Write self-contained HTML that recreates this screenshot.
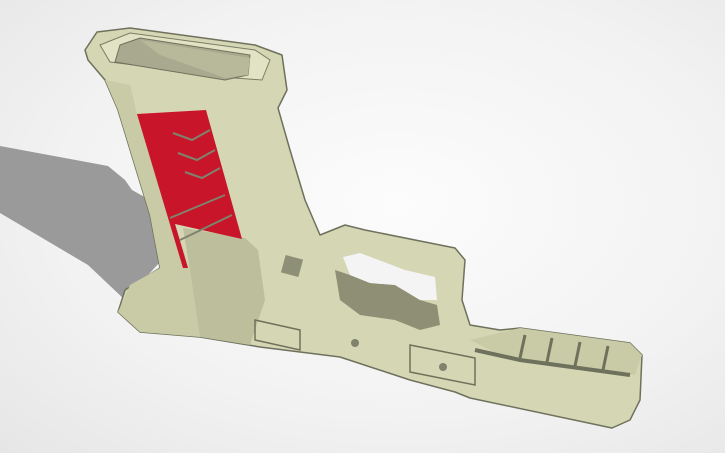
<!DOCTYPE html>
<html><head><style>
html,body{margin:0;padding:0;width:725px;height:453px;overflow:hidden;background:radial-gradient(ellipse at 55% 45%,#fcfcfc 0%,#f2f2f2 60%,#e6e6e6 100%);}
svg{display:block}
</style></head><body>
<svg width="725" height="453" viewBox="0 0 725 453">
<polygon points="0,146 108,166 125,180 132,190 150,200 160,262 125,300 88,265 0,213" fill="#9a9a9a"/>
<polygon points="85,50 97,32 130,28 255,45 282,55 287,90 278,108 290,150 305,200 320,235 345,225 365,230 455,248 465,260 462,300 470,325 500,330 520,328 630,343 642,355 640,400 630,420 612,428 470,398 455,392 440,388 410,380 340,357 300,352 260,347 200,337 140,332 118,312 125,290 160,268 150,215 118,110 105,80 88,60" fill="#d5d6b3" stroke="#6e715c" stroke-width="1.5" stroke-linejoin="round"/>
<polygon points="105,80 118,110 150,215 160,268 130,285 118,312 140,332 200,337 190,270 175,224 137,114 130,85" fill="#c9caa6"/>
<polygon points="183,228 245,238 258,250 265,300 250,345 200,337 190,270" fill="#bdbe9c"/>
<polygon points="100,45 130,33 255,50 270,60 262,80 235,78 110,62" fill="#e2e3c4" stroke="#7a7d66" stroke-width="1"/>
<polygon points="120,45 140,38 250,55 248,75 225,80 115,62" fill="#a8a98e" stroke="#6e715c" stroke-width="1"/>
<polygon points="140,40 160,55 225,78 248,75 250,58" fill="#b8b99b"/>
<polygon points="137,114 206,110 242,239 175,224 188,268 183,268" fill="#c8152a"/>
<g stroke="#7f836d" stroke-width="2" fill="none">
<path d="M173,133 L192,140 L210,130"/><path d="M178,153 L197,160 L215,150"/><path d="M185,172 L202,178 L220,168"/>
<path d="M170,218 L225,195"/><path d="M180,240 L232,215"/>
</g>
<polygon points="335,270 350,275 370,283 395,285 420,300 437,305 440,325 420,330 395,320 360,315 340,300" fill="#8e8f74"/>
<polygon points="343,257 360,253 405,270 435,277 437,300 420,300 395,285 370,283 350,275" fill="#f4f4f4"/>
<polygon points="470,340 520,328 630,343 642,355 635,375 500,355" fill="#c9caa6"/>
<path d="M475,350 L520,360 L630,375" stroke="#6e715c" stroke-width="4" fill="none"/>
<g stroke="#6e715c" stroke-width="3">
<line x1="525" y1="335" x2="520" y2="358"/><line x1="552" y1="338" x2="547" y2="362"/><line x1="580" y1="342" x2="575" y2="366"/><line x1="608" y1="346" x2="603" y2="370"/>
</g>
<rect x="283" y="257" width="18" height="18" fill="#8d8f76" transform="rotate(15 292 266)"/>
<circle cx="355" cy="343" r="4" fill="#7f836d"/><circle cx="443" cy="367" r="4" fill="#7f836d"/>
<polygon points="410,345 475,358 475,385 410,372" fill="none" stroke="#6e715c" stroke-width="1.5"/>
<polygon points="255,320 300,330 300,350 255,340" fill="none" stroke="#6e715c" stroke-width="1.5"/>
</svg>
</body></html>
